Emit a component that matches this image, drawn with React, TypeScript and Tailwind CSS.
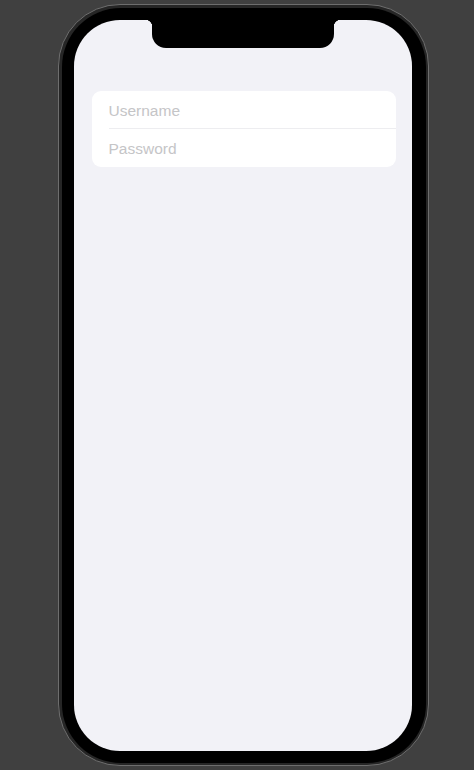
export default function App() {
  return (
    <div className="flex h-[770px] w-full bg-[#404040] pl-[58px] pt-[4px] font-['Liberation_Sans',_Arial,_sans-serif]">
      <div className="h-[762px] w-[371px] rounded-[62px] border-[1.5px] border-[#6e6e6e] bg-[#262626] p-[2.5px]">
        <div className="h-full w-full rounded-[59px] bg-black py-[12px] pl-[12px] pr-[14px]">
          <div className="relative h-full w-full overflow-hidden rounded-[46px] bg-[#f2f2f7]">
            {/* notch */}
            <div className="absolute left-1/2 top-0 flex -translate-x-1/2">
              <div className="h-[7px] w-[7px] bg-[radial-gradient(circle_at_0_100%,transparent_7px,black_7.5px)]" />
              <div className="h-[28px] w-[182px] rounded-b-[14px] bg-black" />
              <div className="h-[7px] w-[7px] bg-[radial-gradient(circle_at_100%_100%,transparent_7px,black_7.5px)]" />
            </div>

            <div className="ml-[18px] mr-[16px] mt-[71px] rounded-[9px] bg-white">
              <div className="flex h-[37px] items-center pl-[17px] pt-[3px]">
                <input
                  type="text"
                  placeholder="Username"
                  className="w-full bg-transparent text-[15.5px] text-black outline-none placeholder:text-[#c5c5c7]"
                />
              </div>
              <div className="ml-[17px] h-px bg-[#ededf0]" />
              <div className="flex h-[38px] items-center pl-[17px] pt-[2px]">
                <input
                  type="password"
                  placeholder="Password"
                  className="w-full bg-transparent text-[15.5px] text-black outline-none placeholder:text-[#c5c5c7]"
                />
              </div>
            </div>
          </div>
        </div>
      </div>
    </div>
  );
}
